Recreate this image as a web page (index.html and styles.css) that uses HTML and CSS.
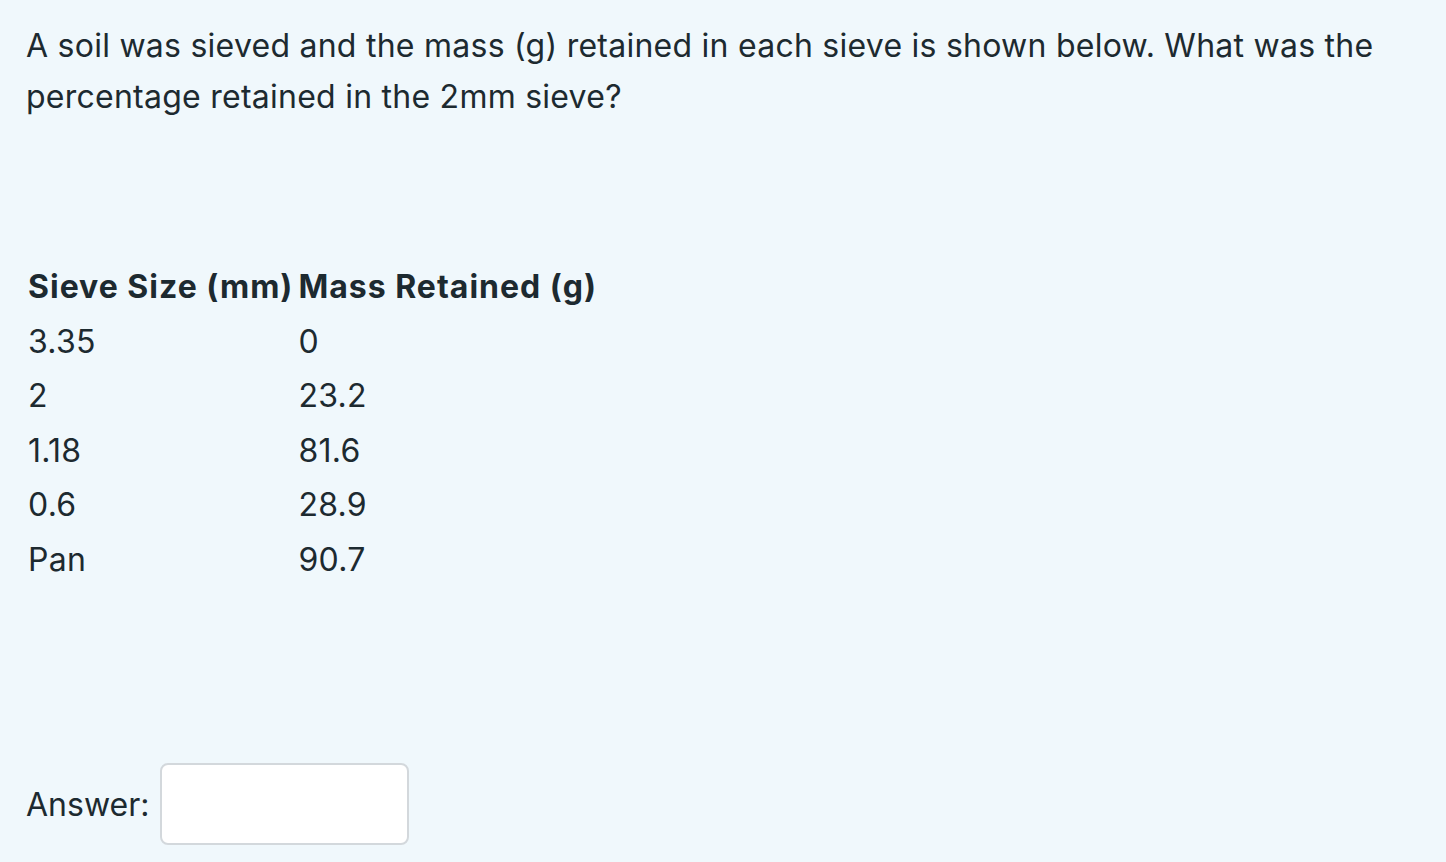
FILE: index.html
```html
<!DOCTYPE html>
<html>
<head>
<meta charset="utf-8">
<link rel="stylesheet" href="styles.css">
</head>
<body>
<div class="question">
  <p class="qtext">A soil was sieved and the mass (g) retained in each sieve is shown below. What was the percentage retained in the 2mm sieve?</p>
  <table class="data">
    <thead>
      <tr><th>Sieve Size (mm)</th><th>Mass Retained (g)</th></tr>
    </thead>
    <tbody>
      <tr><td>3.35</td><td>0</td></tr>
      <tr><td>2</td><td>23.2</td></tr>
      <tr><td>1.18</td><td>81.6</td></tr>
      <tr><td>0.6</td><td>28.9</td></tr>
      <tr><td>Pan</td><td>90.7</td></tr>
    </tbody>
  </table>
  <div class="answer">
    <label class="answer-label" for="ans">Answer:</label>
    <input class="answer-input" id="ans" type="text">
  </div>
</div>
</body>
</html>
```

FILE: styles.css
```css
html, body {
  margin: 0;
  padding: 0;
  background: #f0f8fc;
}
body {
  font-family: Inter, "Noto Sans", "Liberation Sans", sans-serif;
  color: #1d2a30;
  height: 862px;
  overflow: hidden;
}
.question {
  padding: 20px 26px 0 26px;
}
.qtext {
  margin: 0;
  font-size: 32px;
  line-height: 51px;
  letter-spacing: 0.25px;
}
.data {
  margin-top: 138px;
  border-collapse: collapse;
  font-size: 32px;
  letter-spacing: 0.25px;
}
.data th, .data td {
  text-align: left;
  padding: 0 3px 0 2px;
  height: 54.5px;
  line-height: 54.5px;
}
.data th {
  font-weight: 700;
  letter-spacing: 1px;
}
.answer {
  display: flex;
  align-items: center;
  gap: 11px;
  margin-top: 176px;
}
.answer-label {
  font-size: 32px;
  letter-spacing: 0;
}
.answer-input {
  width: 249px;
  height: 82px;
  box-sizing: border-box;
  border: 2px solid #d3d8dc;
  border-radius: 8px;
  background: #fff;
  outline: none;
}
```
